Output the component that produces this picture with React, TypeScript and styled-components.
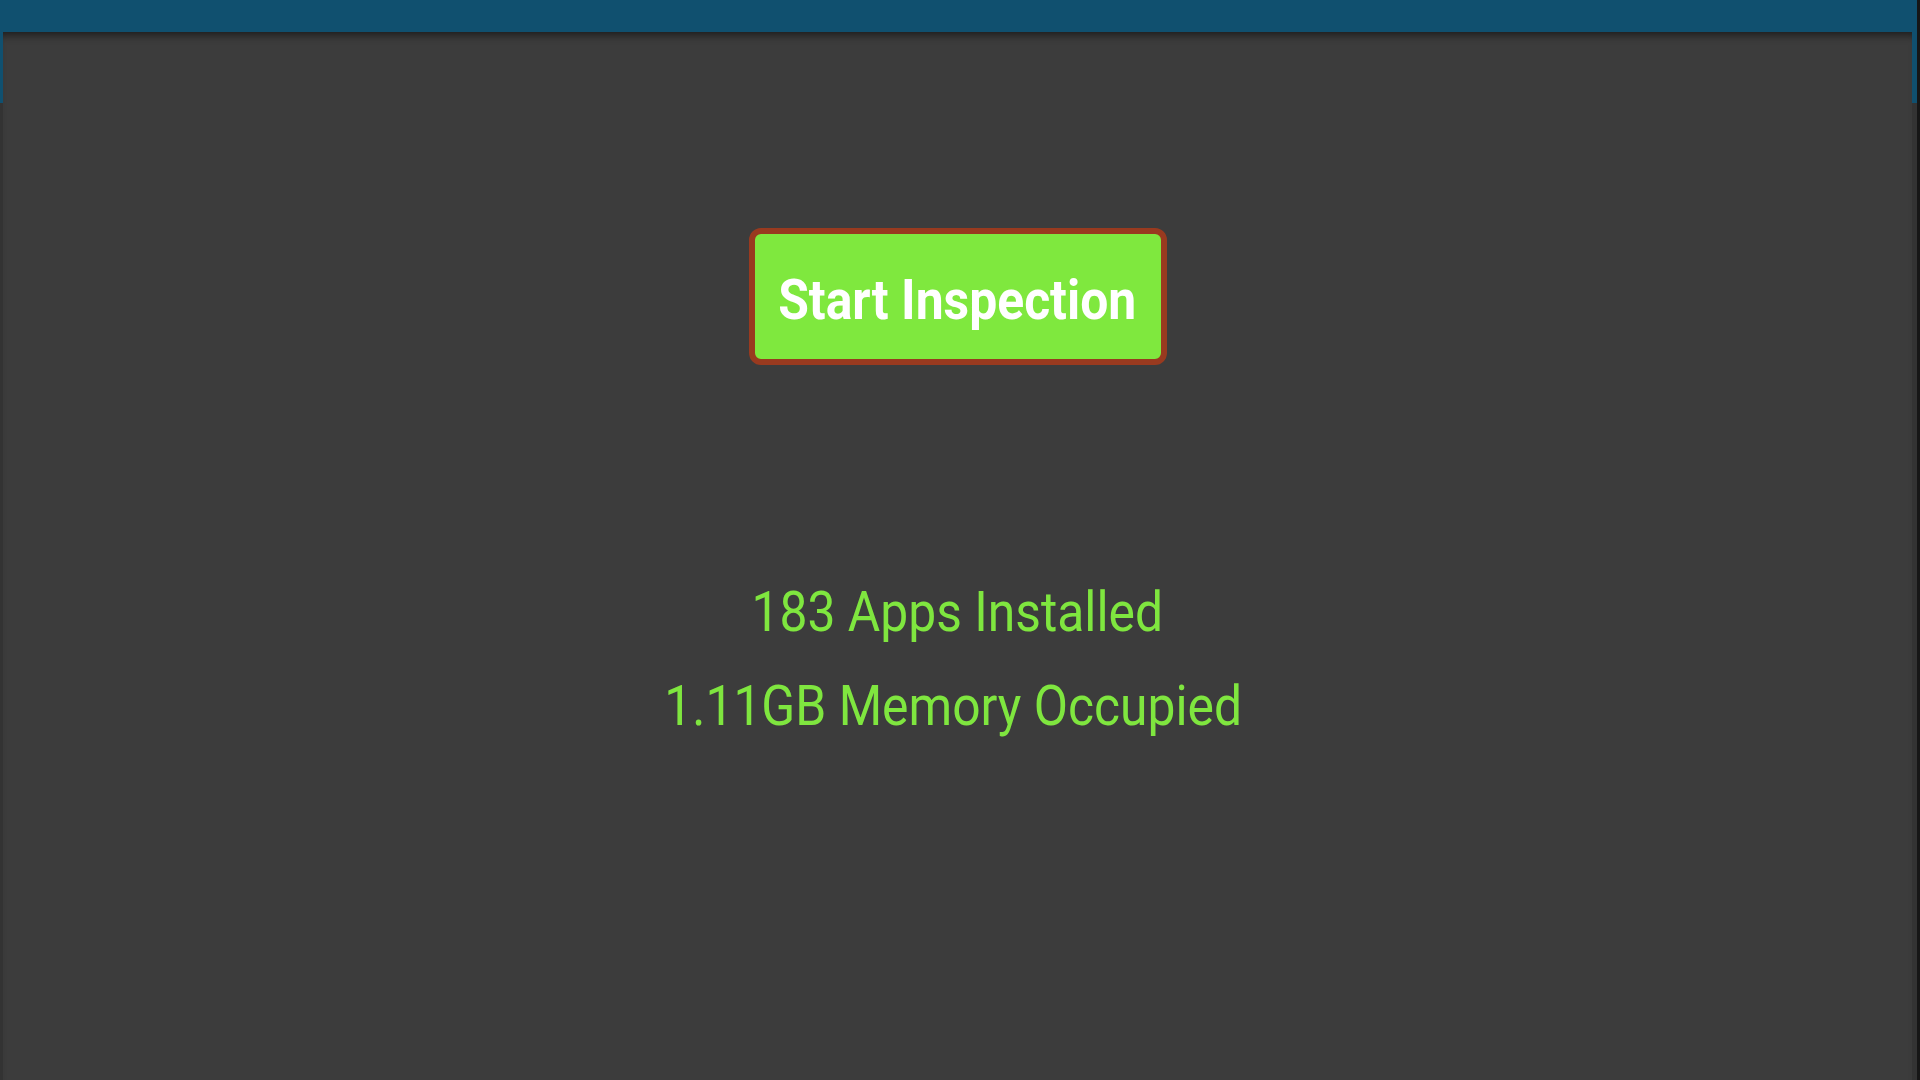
import React from "react";
import styled, { createGlobalStyle } from "styled-components";

const GlobalStyle = createGlobalStyle`
  html, body {
    margin: 0;
    padding: 0;
    background: #3c3c3c;
    font-family: Roboto, "Liberation Sans", sans-serif;
  }
`;

const Shell = styled.div`
  min-height: 100vh;
  box-sizing: border-box;
  border-right: 3px solid #161616;
  background: linear-gradient(#10506f 0 103px, #333333 103px);
  display: flex;
  flex-direction: column;
`;

const Panel = styled.main`
  flex: 1;
  margin: 32px 5px 0 3px;
  background: #3c3c3c;
  box-shadow: inset 0 9px 8px -6px rgba(0, 0, 0, 0.55);
  display: flex;
  flex-direction: column;
  align-items: center;
  padding-top: 196px;
`;

const InspectButton = styled.button`
  width: 418px;
  height: 137px;
  box-sizing: border-box;
  border: 6px solid #993a1f;
  border-radius: 12px;
  background: #7fe83e;
  color: #ffffff;
  font-family: Roboto, "Liberation Sans", sans-serif;
  font-weight: 700;
  font-size: 56px;
  padding: 6px 0 0;
  cursor: pointer;
  display: flex;
  align-items: center;
  justify-content: center;
`;

const Squeezed = styled.span<{ $ratio?: number }>`
  display: inline-block;
  white-space: nowrap;
  transform: scaleX(${(p) => p.$ratio ?? 0.89});
`;

const Stats = styled.div`
  margin-top: 200px;
  display: flex;
  flex-direction: column;
  align-items: center;
`;

const StatLine = styled.div<{ $nudge?: number }>`
  color: #7fe63f;
  font-size: 55px;
  line-height: 94px;
  font-weight: 400;
  margin-right: ${(p) => p.$nudge ?? 0}px;
`;

export default function App() {
  return (
    <>
      <GlobalStyle />
      <Shell>
        <Panel>
          <InspectButton>
            <Squeezed>Start Inspection</Squeezed>
          </InspectButton>
          <Stats>
            <StatLine>
              <Squeezed $ratio={0.905}>183 Apps Installed</Squeezed>
            </StatLine>
            <StatLine $nudge={8}>
              <Squeezed $ratio={0.905}>1.11GB Memory Occupied</Squeezed>
            </StatLine>
          </Stats>
        </Panel>
      </Shell>
    </>
  );
}
